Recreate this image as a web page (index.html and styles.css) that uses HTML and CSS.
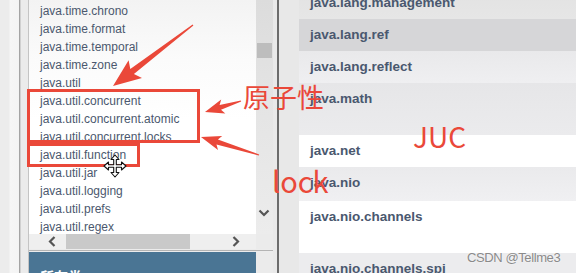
FILE: index.html
```html
<!DOCTYPE html>
<html lang="zh-CN">
<head>
<meta charset="utf-8">
<title>java packages</title>
<link rel="stylesheet" href="styles.css">
</head>
<body>
<div class="screen">
  <div class="gutter"></div>
  <div class="frame-line"></div>
  <div class="frame-pad"></div>
  <div class="left">
    <div class="scroll-area">
      <ul class="pkg-list">
        <li>java.time.chrono</li>
        <li>java.time.format</li>
        <li>java.time.temporal</li>
        <li>java.time.zone</li>
        <li>java.util</li>
        <li>java.util.concurrent</li>
        <li>java.util.concurrent.atomic</li>
        <li>java.util.concurrent.locks</li>
        <li>java.util.function</li>
        <li>java.util.jar</li>
        <li>java.util.logging</li>
        <li>java.util.prefs</li>
        <li>java.util.regex</li>
      </ul>
      <div class="vscroll">
        <div class="vthumb"></div>
        <svg class="vdown" width="12" height="8" viewBox="0 0 12 8"><polyline points="1.5,1.5 6,6 10.5,1.5" fill="none" stroke="#555" stroke-width="2.2"/></svg>
      </div>
    </div>
    <div class="hscroll-row">
      <div class="hscroll">
        <svg class="hleft" width="8" height="11" viewBox="0 0 8 11"><polyline points="6.5,1 2,5.5 6.5,10" fill="none" stroke="#555" stroke-width="2.2"/></svg>
        <div class="hthumb"></div>
        <svg class="hright" width="8" height="11" viewBox="0 0 8 11"><polyline points="1.5,1 6,5.5 1.5,10" fill="none" stroke="#555" stroke-width="2.2"/></svg>
      </div>
      <div class="corner"></div>
    </div>
    <div class="hsep"></div>
    <div class="bottom-row">
      <div class="all-classes">所有类</div>
      <div class="corner"></div>
    </div>
  </div>
  <div class="edge"></div>
  <div class="divider"></div>
  <div class="right-gutter"></div>
  <div class="pkg-table">
    <div class="row r-mgmt">java.lang.management</div>
    <div class="row r-ref">java.lang.ref</div>
    <div class="row r-reflect">java.lang.reflect</div>
    <div class="row r-math tall">java.math</div>
    <div class="row r-net">java.net</div>
    <div class="row r-nio">java.nio</div>
    <div class="row r-channels tall">java.nio.channels</div>
    <div class="row r-spi">java.nio.channels.spi</div>
  </div>

  <svg class="annot" width="576" height="273" viewBox="0 0 576 273">
    <g fill="#ea4839">
      <polygon points="192.6,24.5 130.3,69.1 128.6,60.3 113,86 142.0,77.9 133.9,73.9 193.4,25.5"/>
      <polygon points="240.8,100.5 219.6,104.9 221.2,99.4 205,112 225.3,113.4 221.0,109.7 241.2,101.5"/>
      <polygon points="259.2,154.4 217.9,139.6 222.2,135.9 201,137 218.0,149.9 216.5,144.4 258.8,155.6"/>
    </g>
    <g fill="none" stroke="#ea4839" stroke-width="3">
      <rect x="28.5" y="90.5" width="170" height="51"/>
      <rect x="28.5" y="144.5" width="110" height="21"/>
    </g>
  </svg>
  <svg class="move-cursor" width="24" height="24" viewBox="-1 -1 24 24">
    <polygon points="11,0 15,4.5 12.3,4.5 12.3,9.7 17.5,9.7 17.5,7 22,11 17.5,15 17.5,12.3 12.3,12.3 12.3,17.5 15,17.5 11,22 7,17.5 9.7,17.5 9.7,12.3 4.5,12.3 4.5,15 0,11 4.5,7 4.5,9.7 9.7,9.7 9.7,4.5 7,4.5" fill="#fff" stroke="#111" stroke-width="1.1" stroke-linejoin="round"/>
  </svg>
  <span class="note note-atomic">原子性</span>
  <span class="note note-juc">JUC</span>
  <span class="note note-lock">lock</span>
  <span class="watermark">CSDN @Tellme3</span>
</div>
</body>
</html>
```
FILE: styles.css
```css
html, body {
  margin: 0;
  padding: 0;
  background: #ebebeb;
}

.screen {
  position: relative;
  width: 576px;
  height: 273px;
  overflow: hidden;
  display: flex;
  font-family: "Liberation Sans", Arial, sans-serif;
}

.gutter {
  width: 19px;
  background: linear-gradient(to right, #ececec 0, #ececec 9px, #f6f6f6 10px, #f4f4f4 19px);
}

.frame-line {
  width: 1px;
  border-right: 1px solid #d0d0d0;
  background: #a4a4a4;
}

.frame-pad {
  width: 7px;
  background: #ebebeb;
}

.left {
  width: 244px;
  border-left: 1px solid #c4c4c4;
  display: flex;
  flex-direction: column;
  background: #ececec;
}

.scroll-area {
  height: 234px;
  display: flex;
}

.pkg-list {
  list-style: none;
  margin: 0;
  padding: 2px 0 0 11px;
  width: 216px;
  overflow: hidden;
  background: linear-gradient(to bottom, #f3f3f3 0, #fbfbfb 60px, #ffffff 120px);
}

.pkg-list li {
  font-size: 12px;
  line-height: 18px;
  color: #4b586e;
  white-space: nowrap;
}

.vscroll {
  width: 17px;
  display: flex;
  flex-direction: column;
  background: linear-gradient(to bottom, #dcdcdc 0, #e4e4e4 100px, #ececec 234px);
}

.vthumb {
  margin: 43px 0 0 1px;
  width: 15px;
  height: 15px;
  background: #bdbdbd;
}

.vdown {
  margin: auto 0 17px 2px;
}

.hscroll-row {
  height: 17px;
  display: flex;
}

.hscroll {
  width: 227px;
  display: flex;
  align-items: center;
  background: #efefef;
}

.hleft {
  margin-left: 19px;
}

.hthumb {
  margin-left: 10px;
  width: 124px;
  height: 15px;
  background: #c9c9c9;
}

.hright {
  margin-left: 42px;
}

.corner {
  width: 17px;
  background: #ebebeb;
}

.hsep {
  box-sizing: border-box;
  height: 3px;
  border-top: 1px solid #ececec;
  border-bottom: 1px solid #b4b4b4;
  background: #ececec;
}

.bottom-row {
  flex: 1;
  display: flex;
  margin-top: 1px;
}

.all-classes {
  width: 216px;
  padding: 16px 0 0 11px;
  background: #4a7594;
  color: #ffffff;
  font-family: "Noto Sans CJK SC", sans-serif;
  font-size: 14px;
  font-weight: bold;
  line-height: 16px;
}

.edge {
  width: 4px;
  background: #e9e9e9;
}

.divider {
  width: 2px;
  background: #6c6c6c;
}

.right-gutter {
  width: 20px;
  background: #e8e8e8;
}

.pkg-table {
  flex: 1;
  display: flex;
  flex-direction: column;
  margin-top: -13px;
}

.row {
  height: 32px;
  flex: none;
  box-sizing: border-box;
  padding: 8px 0 0 11px;
  font-size: 13.5px;
  font-weight: bold;
  line-height: 16px;
  color: #4a586f;
  white-space: nowrap;
}

.row.tall {
  height: 52px;
}

.r-mgmt { background: linear-gradient(to bottom, #e2e2e2, #e6e6e6); }
.r-ref { background: #d6d6d8; }
.r-reflect { background: linear-gradient(to bottom, #e9e9eb, #efeff1); }
.r-math { background: linear-gradient(to bottom, #e6e6e8, #ebebed); }
.r-net { background: #ffffff; }
.r-nio { height: 34px; background: linear-gradient(to bottom, #eaeaec, #f0f0f2); }
.r-channels { background: #ffffff; }
.r-spi { background: #ececee; }

.annot {
  position: absolute;
  left: 0;
  top: 0;
  pointer-events: none;
}

.move-cursor {
  position: absolute;
  left: 103px;
  top: 154px;
}

.note {
  position: absolute;
  color: #ea4839;
  font-family: "Noto Sans CJK SC", sans-serif;
  font-weight: 400;
  line-height: 1;
  white-space: nowrap;
}

.note-atomic {
  left: 243px;
  top: 83px;
  font-size: 27px;
}

.note-juc {
  left: 413px;
  top: 122px;
  font-size: 28px;
}

.note-lock {
  left: 272px;
  top: 166px;
  font-size: 29px;
}

.watermark {
  position: absolute;
  left: 467px;
  top: 251px;
  font-family: "Liberation Sans", Arial, sans-serif;
  font-size: 13px;
  line-height: 14px;
  letter-spacing: -0.4px;
  color: #8a8a8a;
  text-shadow: 0 0 2px #ffffff;
}
```
